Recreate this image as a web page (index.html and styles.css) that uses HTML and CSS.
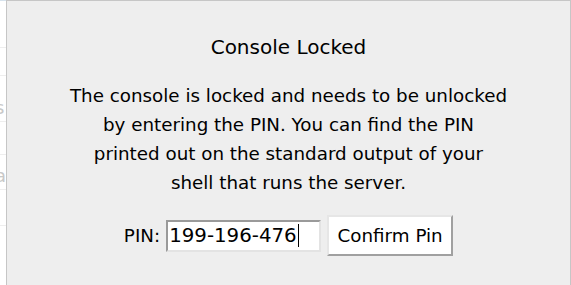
FILE: index.html
```html
<!DOCTYPE html>
<html>
<head>
<meta charset="utf-8">
<link rel="stylesheet" href="styles.css">
</head>
<body>
<div class="page">
  <div class="rows">
    <div class="row r1"></div>
    <div class="row r2"></div>
    <div class="row r3"><span>s</span></div>
    <div class="row r4"></div>
    <div class="row r5"><span>a</span></div>
    <div class="row r6"></div>
    <div class="row r7"></div>
  </div>
  <div class="pin-prompt">
    <div class="inner">
      <h3 class="title">Console Locked</h3>
      <p class="msg">The console is locked and needs to be unlocked<br>by entering the PIN. You can find the PIN<br>printed out on the standard output of your<br>shell that runs the server.</p>
      <form class="pin-form">
        <label class="pin-label">PIN:</label>
        <span class="pin-input">199-196-476<span class="caret"></span></span>
        <span class="btn">Confirm Pin</span>
      </form>
    </div>
  </div>
</div>
</body>
</html>
```
FILE: styles.css
```css
html, body {
  margin: 0;
  padding: 0;
  background: #fff;
}
.page {
  position: relative;
  width: 571px;
  height: 285px;
  overflow: hidden;
  font-family: "DejaVu Sans", sans-serif;
}
.rows {
  display: flex;
  flex-direction: column;
  border-top: 1px solid #d6e2ec;
}
.row {
  border-bottom: 1px solid #eeeeee;
  box-sizing: border-box;
  color: #c8c8c8;
  font-size: 18px;
  display: flex;
  align-items: flex-end;
}
.row span { margin-left: -5px; line-height: 1; padding-bottom: 4px; }
.r1 { height: 47px; }
.r2 { height: 28px; }
.r3 { height: 46px; }
.r4 { height: 33px; }
.r5 { height: 35px; }
.r6 { height: 36px; }
.r7 { height: 60px; border-bottom: none; }

.pin-prompt {
  position: absolute;
  left: 6px;
  top: 0;
  width: 565px;
  height: 300px;
  box-sizing: border-box;
  background: #eeeeee;
  border: 1px solid #c6c6c6;
}
.inner {
  display: flex;
  flex-direction: column;
  align-items: center;
  color: #000;
}
.title {
  margin: 32px 0 0 0;
  font-size: 20px;
  font-weight: normal;
  line-height: 28px;
}
.msg {
  margin: 20px 0 0 0;
  font-size: 18.3px;
  line-height: 29px;
  text-align: center;
}
.pin-form {
  margin: 18px 0 0 0;
  display: flex;
  align-items: center;
  font-size: 18.3px;
}
.pin-label { margin-right: 6px; }
.pin-input {
  box-sizing: border-box;
  width: 155px;
  height: 32px;
  background: #fff;
  border-style: solid;
  border-width: 2px;
  border-color: #9a9a9a #e3e3e3 #e3e3e3 #9a9a9a;
  display: flex;
  align-items: center;
  padding-left: 1px;
  line-height: 1;
  font-size: 19.8px;
}
.caret {
  display: inline-block;
  width: 1px;
  height: 23px;
  background: #000;
  margin-left: 1px;
}
.btn {
  box-sizing: border-box;
  margin-left: 6px;
  width: 126px;
  height: 41px;
  background: #fff;
  border-style: solid;
  border-width: 2px;
  border-color: #e6e6e6 #a0a0a0 #a0a0a0 #e6e6e6;
  display: flex;
  align-items: center;
  justify-content: center;
}
```
